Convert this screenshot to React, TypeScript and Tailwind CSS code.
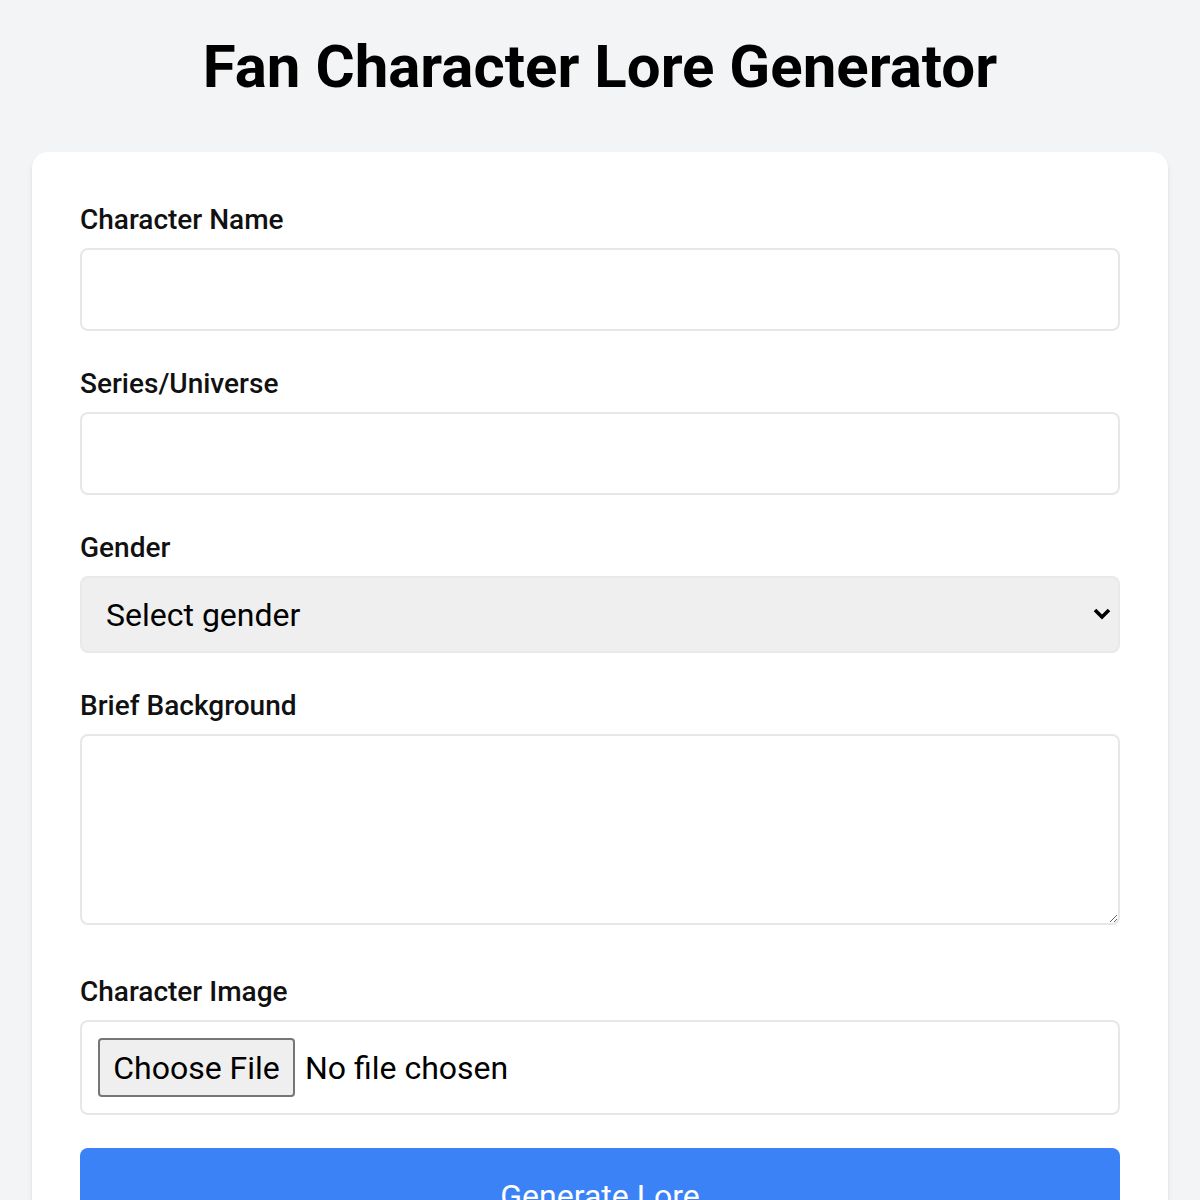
import React from "react";

export default function App() {
  const font = { fontFamily: "Roboto, 'Noto Sans', sans-serif" };
  return (
    <div className="min-h-screen bg-[#f3f4f6] pt-[31px] pb-10" style={font}>
      <h1 className="text-center text-[60px] leading-[72px] font-bold text-black mb-[49px]">
        Fan Character Lore Generator
      </h1>
      <div className="mx-[32px] bg-white rounded-[16px] shadow-md px-[48px] pt-[48px] pb-[48px]">
        <form>
          <div className="mb-[33px]">
            <label className="block text-[28px] leading-[40px] font-medium text-[#111] mb-[8px]">
              Character Name
            </label>
            <input
              type="text"
              className="block w-full h-[83px] border-2 border-[#e5e7eb] rounded-[8px] px-[24px] text-[32px] outline-none"
            />
          </div>
          <div className="mb-[33px]">
            <label className="block text-[28px] leading-[40px] font-medium text-[#111] mb-[8px]">
              Series/Universe
            </label>
            <input
              type="text"
              className="block w-full h-[83px] border-2 border-[#e5e7eb] rounded-[8px] px-[24px] text-[32px] outline-none"
            />
          </div>
          <div className="mb-[33px]">
            <label className="block text-[28px] leading-[40px] font-medium text-[#111] mb-[8px]">
              Gender
            </label>
            <div className="relative">
              <select
                defaultValue=""
                className="block w-full h-[77px] appearance-none bg-[#efefef] border-2 border-[#e9e9e9] rounded-[8px] pl-[24px] pr-[60px] text-[32px] text-black outline-none"
                style={font}
              >
                <option value="">Select gender</option>
                <option value="male">Male</option>
                <option value="female">Female</option>
                <option value="other">Other</option>
              </select>
              <svg
                className="absolute right-[8px] top-[30px] pointer-events-none"
                width="20"
                height="16"
                viewBox="0 0 20 16"
              >
                <path d="M3 4 L10 11 L17 4" fill="none" stroke="#000" strokeWidth="3.6" />
              </svg>
            </div>
          </div>
          <div className="mb-[47px]">
            <label className="block text-[28px] leading-[40px] font-medium text-[#111] mb-[8px]">
              Brief Background
            </label>
            <textarea
              className="block w-full h-[191px] border-2 border-[#e5e7eb] rounded-[8px] px-[24px] py-[16px] text-[32px] outline-none"
            />
          </div>
          <div className="mb-[33px]">
            <label className="block text-[28px] leading-[40px] font-medium text-[#111] mb-[8px]">
              Character Image
            </label>
            <div className="h-[95px] border-2 border-[#e5e7eb] rounded-[8px] px-[16px] flex items-center">
              <input
                type="file"
                className="text-[32px] text-black file:h-[59px] file:w-[197px] file:border-2 file:border-[#767676] file:rounded-[4px] file:bg-[#efefef] file:text-[32px] file:text-black file:mr-[10px] file:px-0"
                style={font}
              />
            </div>
          </div>
          <button
            type="button"
            className="block w-full bg-[#3b82f6] text-white text-[32px] leading-[48px] rounded-[8px] pt-[24px] pb-[24px]"
          >
            Generate Lore
          </button>
        </form>
      </div>
    </div>
  );
}
